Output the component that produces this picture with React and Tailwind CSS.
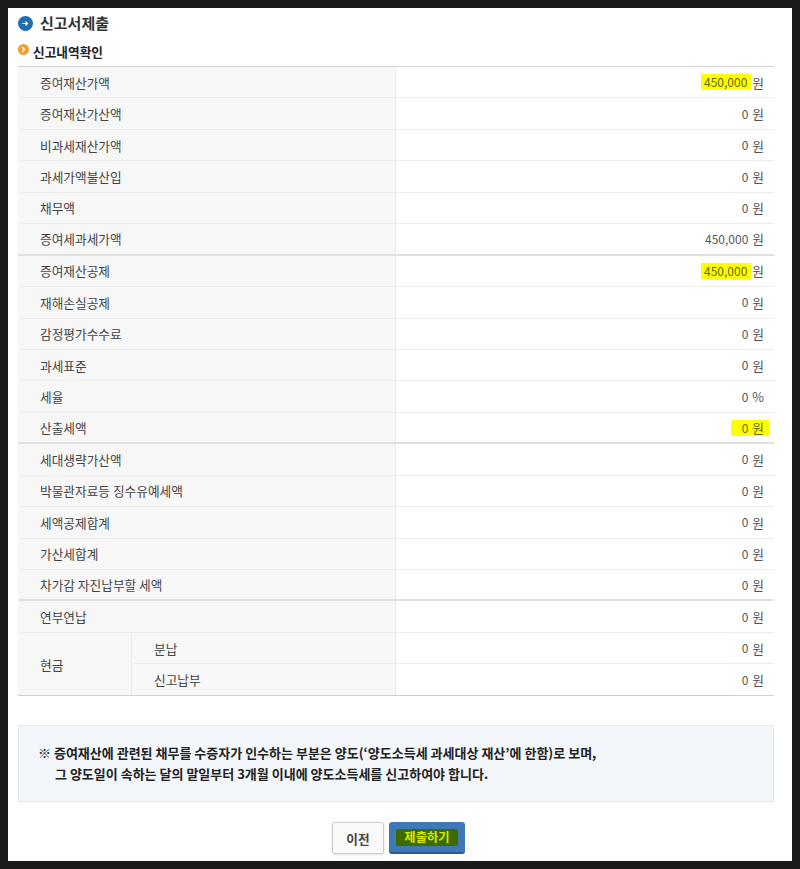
import React from 'react';

const rows = [
  { label: '증여재산가액', value: '450,000', mark: true },
  { label: '증여재산가산액', value: '0' },
  { label: '비과세재산가액', value: '0' },
  { label: '과세가액불산입', value: '0' },
  { label: '채무액', value: '0' },
  { label: '증여세과세가액', value: '450,000', end: true },
  { label: '증여재산공제', value: '450,000', mark: true },
  { label: '재해손실공제', value: '0' },
  { label: '감정평가수수료', value: '0' },
  { label: '과세표준', value: '0' },
  { label: '세율', value: '0', unit: '%' },
  { label: '산출세액', value: '0', markAll: true, end: true },
  { label: '세대생략가산액', value: '0' },
  { label: '박물관자료등 징수유예세액', value: '0' },
  { label: '세액공제합계', value: '0' },
  { label: '가산세합계', value: '0' },
  { label: '차가감 자진납부할 세액', value: '0', end: true },
  { label: '연부연납', value: '0' },
];

function Amount({ row }) {
  const unit = row.unit || '원';
  if (row.markAll) {
    return (
      <span className="bg-[#ffff00] h-[16px] w-[38px] -mr-[5px] pr-[5px] flex items-center justify-end text-[#666600]">
        <span className="text-[12px]">{row.value}</span>
        <span className="ml-[4px]">{unit}</span>
      </span>
    );
  }
  if (row.mark) {
    return (
      <span className="flex items-center">
        <span className="bg-[#ffff00] h-[16px] w-[50px] pr-[4px] flex items-center justify-end text-[12px] text-[#666600]">{row.value}</span>
        <span className="ml-[1px]">{unit}</span>
      </span>
    );
  }
  return (
    <span className="flex items-center">
      <span className="text-[12px]">{row.value}</span>
      <span className="ml-[4px]">{unit}</span>
    </span>
  );
}

function Row({ row }) {
  return (
    <div className={`flex h-[31.45px] ${row.end ? 'border-b-2 border-[#e0e0e0]' : 'border-b border-[#ececec]'}`}>
      <div className="w-[378px] bg-[#f7f7f7] border-r border-[#ececec] flex items-center pl-[22px]">{row.label}</div>
      <div className="flex-1 flex items-center justify-end pr-[10px] text-[#555555]">
        <Amount row={row} />
      </div>
    </div>
  );
}

function SubRow({ label, className }) {
  return (
    <div className={`flex ${className}`}>
      <div className="w-[264px] bg-[#f7f7f7] border-r border-[#ececec] flex items-center pl-[22px]">{label}</div>
      <div className="flex-1 flex items-center justify-end pr-[10px] text-[#555555]">
        <Amount row={{ value: '0' }} />
      </div>
    </div>
  );
}

export default function App() {
  return (
    <div className="w-[800px] h-[869px] bg-[#1a1a1a] p-[8px] overflow-hidden">
      <div className="h-[853px] w-[784px] bg-white px-[10px] text-[12.7px] text-[#444444] font-['Noto_Sans_CJK_KR','Noto_Sans',sans-serif]">
        <div className="flex items-center h-[30px]">
          <svg width="15" height="15" viewBox="0 0 15 15">
            <circle cx="7.5" cy="7.5" r="7.5" fill="#1f6fae" />
            <path d="M4.5 7.5h5M7.5 5.5l2 2-2 2" fill="none" stroke="#ffffff" strokeWidth="1.2" />
          </svg>
          <h1 className="ml-[7px] text-[15px] font-bold text-[#333333]">신고서제출</h1>
        </div>
        <div className="flex items-center h-[28px]">
          <svg width="11" height="11" viewBox="0 0 11 11" className="-mt-[5px]">
            <circle cx="5.5" cy="5.5" r="5.5" fill="#f0a030" />
            <path d="M4 3l2.5 2.5L4 8" fill="none" stroke="#ffffff" strokeWidth="1.3" />
          </svg>
          <h2 className="ml-[4px] text-[12.7px] font-bold text-[#222222]">신고내역확인</h2>
        </div>
        <div className="w-[756px] border-t border-[#d4d4d4]">
          {rows.map((row) => (
            <Row key={row.label} row={row} />
          ))}
          <div className="flex border-b border-[#cfcfcf]">
            <div className="w-[114px] bg-[#f7f7f7] border-r border-[#ececec] flex items-center pl-[22px] shrink-0">현금</div>
            <div className="flex-1">
              <SubRow label="분납" className="h-[31.45px] border-b border-[#ececec]" />
              <SubRow label="신고납부" className="h-[31px]" />
            </div>
          </div>
        </div>
        <div className="w-[756px] h-[77px] mt-[29px] bg-[#f3f6fb] border border-[#e3e8f0] pl-[19px] pt-[16px] text-[13px] font-bold text-[#222222] leading-[21px]">
          <p>※ 증여재산에 관련된 채무를 수증자가 인수하는 부분은 양도(‘양도소득세 과세대상 재산’에 한함)로 보며,</p>
          <p className="pl-[17px]">그 양도일이 속하는 달의 말일부터 3개월 이내에 양도소득세를 신고하여야 합니다.</p>
        </div>
        <div className="flex justify-center gap-[5px] mt-[20px] pr-[3px]">
          <button className="w-[52px] h-[32px] bg-[#fafafa] border border-[#cccccc] rounded-[3px] shadow-sm font-bold text-[#444444]">이전</button>
          <button className="w-[76px] h-[32px] bg-[#3f78b8] border-b-2 border-[#2b5a92] rounded-[3px] flex items-center justify-center">
            <span className="bg-[#3d6b00] h-[17px] w-[62px] rounded-[2px] flex items-center justify-center text-[12.3px] font-bold text-[#d8e800]">제출하기</span>
          </button>
        </div>
      </div>
    </div>
  );
}
